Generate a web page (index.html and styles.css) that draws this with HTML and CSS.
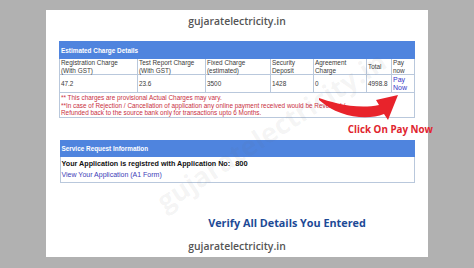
FILE: index.html
```html
<!DOCTYPE html>
<html>
<head>
<meta charset="utf-8">
<link rel="stylesheet" href="styles.css">
</head>
<body>
<div class="card">
  <div class="site">gujaratelectricity.in</div>

  <table class="grid charges">
    <colgroup>
      <col class="c1"><col class="c2"><col class="c3"><col class="c4"><col class="c5"><col class="c6"><col class="c7">
    </colgroup>
    <tr><th colspan="7" class="head">Estimated Charge Details</th></tr>
    <tr class="labels">
      <td>Registration Charge<br>(With GST)</td>
      <td>Test Report Charge<br>(With GST)</td>
      <td>Fixed Charge<br>(estimated)</td>
      <td>Security<br>Deposit</td>
      <td>Agreement<br>Charge</td>
      <td class="mid">Total</td>
      <td>Pay<br>now</td>
    </tr>
    <tr class="values">
      <td>47.2</td>
      <td>23.6</td>
      <td>3500</td>
      <td>1428</td>
      <td>0</td>
      <td>4998.8</td>
      <td class="pay"><a>Pay<br>Now</a></td>
    </tr>
    <tr class="note1"><td colspan="7">** This charges are provisional Actual Charges may vary.</td></tr>
    <tr class="note2"><td colspan="7">**In case of Rejection / Cancellation of application any online payment received would be Reversed /<br>Refunded back to the source bank only for transactions upto 6 Months.</td></tr>
  </table>

  <div class="callout">Click On Pay Now</div>

  <table class="grid service">
    <tr><th class="head">Service Request Information</th></tr>
    <tr class="info">
      <td><div class="regline"><b>Your Application is registred with Application No:</b><span class="appno">800</span></div>
        <a class="form-link">View Your Application (A1 Form)</a></td>
    </tr>
  </table>

  <div class="verify">Verify All Details You Entered</div>
  <div class="site bottom">gujaratelectricity.in</div>

  <div class="watermark">gujaratelectricity.in</div>

  <svg class="arrow" width="90" height="40" viewBox="0 0 90 40">
    <path d="M3,10 C15,14 40,22 63,17 L60,12 L82,7 L72,32 L68,26 C50,33 22,29 3,12 Z" fill="#e8232b"/>
  </svg>
</div>
</body>
</html>
```

FILE: styles.css
```css
* { box-sizing: border-box; }
html, body { margin: 0; padding: 0; }
body {
  width: 474px;
  height: 268px;
  background: #b1b1b1;
  overflow: hidden;
  padding-top: 10px;
  padding-left: 46px;
}
.card {
  position: relative;
  width: 382px;
  height: 247px;
  background: #fff;
  display: flex;
  flex-direction: column;
  align-items: center;
}
.site {
  font-family: "Open Sans", sans-serif;
  font-weight: 600;
  font-size: 10.4px;
  line-height: 14px;
  color: #555;
  margin-top: 4px;
}
.grid {
  border-collapse: collapse;
  width: 355px;
  font-family: "Liberation Sans", Arial, sans-serif;
  font-size: 6.4px;
  color: #3a3a3a;
  table-layout: fixed;
}
.grid td, .grid th {
  border: 1px solid #b9c8dc;
  padding: 0 1px;
  text-align: left;
  vertical-align: middle;
}
.charges { margin-top: 13px; }
.c1 { width: 78px; } .c2 { width: 68px; } .c3 { width: 65px; } .c4 { width: 43px; }
.c5 { width: 53px; } .c6 { width: 25px; } .c7 { width: 23px; }
.head {
  background: #4f84de;
  color: #fff;
  font-weight: bold;
  height: 17px;
  font-size: 6.4px;
  border-color: #4f84de !important;
}
.labels td { height: 16px; line-height: 7.4px; }
.values td { height: 18px; line-height: 7.4px; }
.pay a { color: #3636c8; font-size: 7px; }
.note1 td { height: 9px; line-height: 7px; color: #c9303f; border-bottom: none; }
.note2 td { height: 16px; line-height: 7.2px; color: #c9303f; border-top: none; }
.callout {
  align-self: flex-end;
  margin-right: -5px;
  margin-top: 5px;
  font-family: "Open Sans", sans-serif;
  font-weight: 700;
  font-size: 9.8px;
  line-height: 14px;
  color: #e0242e;
}
.service { margin-top: 3px; }
.service .head { height: 16px; }
.info td {
  height: 26px;
  padding: 2px 1px 1px;
  vertical-align: top;
}
.regline {
  display: flex;
  align-items: baseline;
  line-height: 10px;
  color: #111;
  font-size: 7.2px;
}
.appno {
  margin-left: 5px;
  font-weight: bold;
  font-size: 7.5px;
}
.form-link {
  display: block;
  color: #3d3db8;
  font-size: 7px;
  line-height: 11px;
}
.verify {
  margin-top: 33px;
  margin-left: 100px;
  font-family: "Open Sans", sans-serif;
  font-weight: 700;
  font-size: 10.8px;
  line-height: 14px;
  color: #1d4a96;
}
.site.bottom { margin-top: 9px; }
.watermark {
  position: absolute;
  left: 75px;
  top: 102px;
  width: 300px;
  text-align: center;
  font-family: "Open Sans", sans-serif;
  font-weight: 700;
  font-size: 27px;
  color: rgba(110, 110, 110, 0.07);
  transform: rotate(-33deg);
  white-space: nowrap;
  pointer-events: none;
}
.arrow {
  position: absolute;
  left: 270px;
  top: 78px;
}
```
